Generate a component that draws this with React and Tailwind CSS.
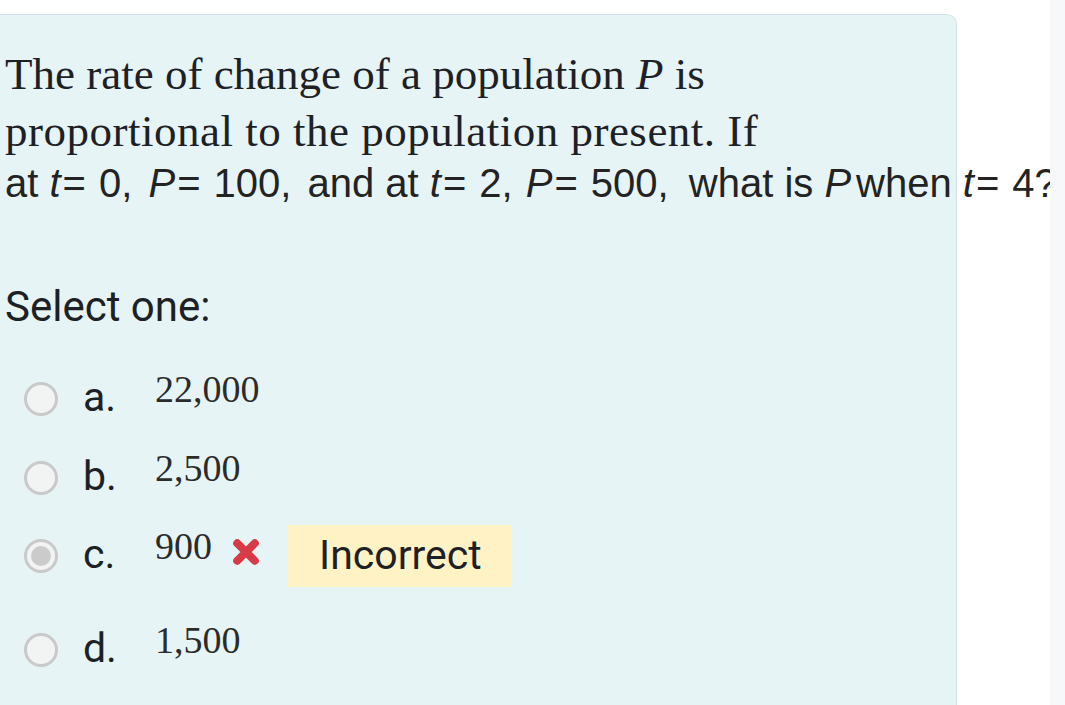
import React from 'react';

const serif = { fontFamily: '"Liberation Serif", serif' };

// "=" in the formula line: tight on the left, wide gap on the right
const Eq = () => <span className="ml-[2px] mr-[13px]">=</span>;

const Radio = ({ checked }) => (
  <span className="flex h-[34px] w-[34px] shrink-0 items-center justify-center rounded-full border-[3px] border-[#c9c9c9] bg-[#f2f3f3]">
    {checked && <span className="h-[20px] w-[20px] rounded-full bg-[#cbcbcb]" />}
  </span>
);

const Option = ({ letter, value, checked, children, className = '' }) => (
  <div className={`flex items-center ${className}`}>
    <div className="ml-[19px] mr-[25px]">
      <Radio checked={checked} />
    </div>
    <span className="-mt-[3px] w-[72px] text-[41px] leading-none text-[#1d2125] font-['Roboto',sans-serif]">{letter}</span>
    <span className="-mt-[20px] text-[38px] leading-none text-[#2b2b2b] font-['Liberation_Serif',serif]">{value}</span>
    {children}
  </div>
);

export default function App() {
  return (
    <div className="flex h-[705px] w-[1065px] overflow-hidden bg-white">
      <main className="w-[1050px] shrink-0 overflow-hidden pt-[14px]">
        <div className="h-[720px] w-[957px] rounded-tr-[10px] border border-l-0 border-b-0 border-[#cfe3e7] bg-[#e7f4f6] pl-[5px] pt-[31px] text-[#1d2125]">
          <p style={serif} className="text-[45px] leading-[57px] whitespace-nowrap">
            The rate of change of a population <i>P</i> is
            <br />
            <span className="tracking-[0.5px]">proportional to the population present. If</span>
          </p>
          <p className="whitespace-nowrap text-[40px] leading-[46px] text-[#232323] font-['Liberation_Sans',sans-serif]">
            at <i>t</i><Eq />0, <i className="ml-[5px]">P</i><Eq />100, <span className="ml-[5px]">and at </span>
            <i>t</i><Eq />2, <i className="ml-[2px]">P</i><Eq />500, <span className="ml-[9px]">what is </span>
            <i>P</i><span className="ml-[5px]">when </span><i>t</i><Eq />4?
          </p>

          <p className="mt-[80px] text-[42px] leading-none font-['Roboto',sans-serif]">Select one:</p>

          <div className="mt-[52px] flex flex-col">
            <Option letter="a." value="22,000" />
            <Option letter="b." value="2,500" className="mt-[41px]" />
            <Option letter="c." value="900" checked className="mt-[28px]">
              <svg viewBox="0 0 24 24" className="ml-[19px] -mt-[8px] h-[30px] w-[30px]" fill="none" stroke="#d63b47" strokeWidth="6.5" strokeLinecap="round">
                <path d="M5 5 L19 19 M19 5 L5 19" />
              </svg>
              <span className="ml-[26px] flex h-[62px] items-center bg-[#fff3c5] pl-[32px] pr-[30px] text-[41px] font-['Roboto',sans-serif] text-[#1d2125]">
                Incorrect
              </span>
            </Option>
            <Option letter="d." value="1,500" className="mt-[44px]" />
          </div>
        </div>
      </main>
      <aside className="flex-1 bg-[#f7f8f9]" />
    </div>
  );
}
